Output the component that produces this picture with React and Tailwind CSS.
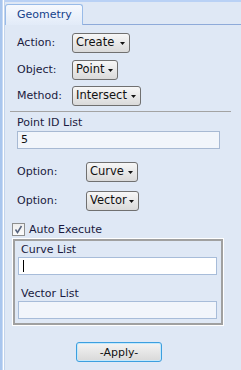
import React from "react";

function Dd({ w, children }) {
  return (
    <div
      className={`${w} h-[20px] flex items-center justify-between pl-[3px] pr-[4px] border border-[#707070] rounded-[3px] bg-gradient-to-b from-[#f7f7f7] to-[#dadada] text-[#111] text-[11.5px] leading-none`}
    >
      <span>{children}</span>
      <svg width="5" height="3" viewBox="0 0 5 3">
        <path d="M0 0h5L2.5 3z" fill="#111" />
      </svg>
    </div>
  );
}

export default function App() {
  return (
    <div
      className="w-[241px] h-[370px] flex bg-[#dfe8f5] overflow-hidden text-[11px] text-[#1a1a40]"
      style={{ fontFamily: '"DejaVu Sans", Verdana, sans-serif' }}
    >
      <div className="w-[2px] bg-[#a9c6ee]" />
      <div className="w-[1px] bg-[#c8daf3]" />
      <div className="w-[1px] bg-white" />
      <div className="flex-1 flex flex-col border-l border-[#c3d4ec]">
        <div className="h-[2px] bg-[#b9d1f5]" />
        <div className="h-[2px]" />
        <div className="flex h-[21px]">
          <div className="w-[78px] border border-b-0 border-[#99bbe8] rounded-t-[3px] bg-gradient-to-b from-[#f6f9fe] to-[#e2ebf8] pl-[11px] text-[#15428b] leading-[20px]">
            Geometry
          </div>
          <div className="flex-1 flex flex-col justify-end">
            <div className="h-[1px] bg-[#8eaad9]" />
          </div>
        </div>
        <div className="flex flex-col pl-[12px] pt-[8px]">
          <div className="flex items-center">
            <div className="w-[55px]">Action:</div>
            <Dd w="w-[58px]">Create</Dd>
          </div>
          <div className="flex items-center mt-[7px]">
            <div className="w-[55px]">Object:</div>
            <Dd w="w-[46px]">Point</Dd>
          </div>
          <div className="flex items-center mt-[6px]">
            <div className="w-[55px]">Method:</div>
            <Dd w="w-[69px]">Intersect</Dd>
          </div>
          <div className="ml-[-7px] w-[221px] h-[1px] bg-[#a3a3a3] mt-[5px]" />
          <div className="mt-[4px] leading-[13px]">Point ID List</div>
          <div className="mt-[2px] w-[203px] h-[18px] border border-[#a7b9d3] bg-[#f1f5fb] pl-[3px] leading-[16px] text-[#111]">
            5
          </div>
          <div className="flex items-center mt-[13px]">
            <div className="w-[69px]">Option:</div>
            <Dd w="w-[52px]">Curve</Dd>
          </div>
          <div className="flex items-center mt-[9px]">
            <div className="w-[69px]">Option:</div>
            <Dd w="w-[53px]">Vector</Dd>
          </div>
          <div className="flex items-center mt-[12px] ml-[-5px]">
            <div className="w-[13px] h-[13px] border border-[#8e8f8f] bg-gradient-to-b from-[#eeeeee] to-[#fbfbfb] flex items-center justify-center">
              <svg width="11" height="11" viewBox="0 0 11 11">
                <path d="M2.5 5.5 L4.5 8.5 L8.5 2" fill="none" stroke="#56637e" strokeWidth="1.5" />
              </svg>
            </div>
            <span className="ml-[4px] leading-[13px]">Auto Execute</span>
          </div>
          <div className="mt-[3px] ml-[-4px] w-[210px] h-[86px] border-2 border-[#a0a0a0] shadow-[0_0_0_1px_#ffffff] flex flex-col pt-[2px] pb-[4px]">
            <div className="pl-[6px] leading-[13px]">Curve List</div>
            <div className="mt-[1px] ml-[3px] w-[199px] h-[18px] border border-[#a7bcd9] bg-white flex items-center pl-[4px]">
              <div className="w-[1px] h-[12px] bg-black" />
            </div>
            <div className="mt-[12px] pl-[6px] leading-[13px]">Vector List</div>
            <div className="mt-[1px] ml-[3px] w-[199px] h-[18px] border border-[#a7bcd9] bg-[#f1f5fb]" />
          </div>
          <div className="mt-[17px] ml-[59px] w-[86px] h-[20px] rounded-[3px] border border-[#3c9fdf] shadow-[inset_0_0_0_1px_#c4e8fb] bg-gradient-to-b from-[#f4f4f4] to-[#d9d9d9] flex items-center justify-center text-[#111] leading-none">
            -Apply-
          </div>
        </div>
      </div>
    </div>
  );
}
